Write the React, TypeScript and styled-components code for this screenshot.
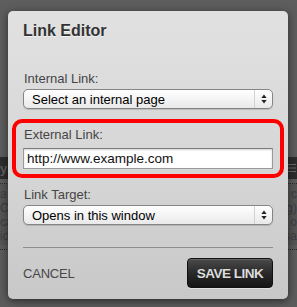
import React from 'react';
import styled, { createGlobalStyle } from 'styled-components';

const GlobalStyle = createGlobalStyle`
  html, body {
    margin: 0;
    padding: 0;
    background: #5c5c5c;
  }
  body {
    font-family: 'Liberation Sans', Arial, Helvetica, sans-serif;
    -webkit-font-smoothing: antialiased;
  }
`;

const backgroundRows: [string, string][] = [
  ['a', 'c'],
  ['C', 'g)'],
  ['ca', 'o'],
  ['id', 'sa'],
];

const App: React.FC = () => {
  return (
    <>
      <GlobalStyle />
      <Page>
        {/* dimmed page content behind the modal */}
        <Backdrop>
          <BackdropTop />
          <Toolbar>
            <ToolbarTitle>yl</ToolbarTitle>
            <MenuIcon width="9" height="10" viewBox="0 0 9 10">
              <rect x="0" y="1" width="9" height="1" fill="#6a6a6a" />
              <rect x="0" y="4.5" width="9" height="1" fill="#6a6a6a" />
              <rect x="0" y="8" width="9" height="1" fill="#6a6a6a" />
            </MenuIcon>
          </Toolbar>
          <DottedRule />
          <TextBlock>
            {backgroundRows.map(([left, right]) => (
              <TextRow key={left}>
                <span>{left}</span>
                <span>{right}</span>
              </TextRow>
            ))}
          </TextBlock>
          <DottedRule />
        </Backdrop>

        <Dialog>
          <Title>Link Editor</Title>

          <Field>
            <Label>Internal Link:</Label>
            <Select>
              <SelectText>Select an internal page</SelectText>
              <ArrowCell>
                <SelectArrows />
              </ArrowCell>
            </Select>
          </Field>

          <Highlight>
            <Label>External Link:</Label>
            <TextInput defaultValue="http://www.example.com" readOnly />
          </Highlight>

          <Field $tight>
            <Label>Link Target:</Label>
            <Select>
              <SelectText>Opens in this window</SelectText>
              <ArrowCell>
                <SelectArrows />
              </ArrowCell>
            </Select>
          </Field>

          <Divider />

          <Footer>
            <CancelButton type="button">CANCEL</CancelButton>
            <SaveButton type="button">SAVE LINK</SaveButton>
          </Footer>
        </Dialog>
      </Page>
    </>
  );
};

const SelectArrows: React.FC = () => (
  <svg width="6" height="10" viewBox="0 0 6 10">
    <path d="M3 0.5 L5.6 4 L0.4 4 Z" fill="#222" />
    <path d="M3 9.5 L5.6 6 L0.4 6 Z" fill="#222" />
  </svg>
);

const Page = styled.div`
  position: relative;
  width: 297px;
  height: 307px;
  overflow: hidden;
  background: #5c5c5c;
`;

const Backdrop = styled.div`
  display: flex;
  flex-direction: column;
  height: 100%;
`;

const BackdropTop = styled.div`
  height: 157px;
  background: #5d5d5d;
`;

const Toolbar = styled.div`
  height: 22px;
  background: #2d2d2d;
  display: flex;
  align-items: center;
  justify-content: space-between;
  padding-right: 1px;
`;

const ToolbarTitle = styled.span`
  font-size: 13px;
  font-weight: bold;
  color: #5e5e5e;
`;

const MenuIcon = styled.svg`
  display: block;
`;

const DottedRule = styled.div`
  height: 0;
  margin-top: 4px;
  border-top: 1px dotted #2a2a2a;
`;

const TextBlock = styled.div`
  display: flex;
  flex-direction: column;
  padding: 3px 0 2px;
  background: #555;
`;

const TextRow = styled.div`
  display: flex;
  justify-content: space-between;
  height: 14px;
  font-size: 12px;
  line-height: 14px;
  color: #3e3e3e;
`;

const Dialog = styled.div`
  position: absolute;
  left: 8px;
  top: 11px;
  width: 280px;
  height: 288px;
  box-sizing: border-box;
  padding: 11px 15px 11px 15px;
  display: flex;
  flex-direction: column;
  border-radius: 5px;
  background: linear-gradient(to bottom, #e1e1e1 0%, #d6d6d6 55%, #c8c8c8 100%);
  box-shadow: 0 2px 8px rgba(0, 0, 0, 0.55);
`;

const Title = styled.h1`
  margin: 0;
  font-size: 16px;
  line-height: 18px;
  font-weight: bold;
  color: #333;
  text-shadow: 0 1px 0 rgba(255, 255, 255, 0.6);
`;

const Field = styled.div<{ $tight?: boolean }>`
  display: flex;
  flex-direction: column;
  gap: 3px;
  margin-top: ${props => (props.$tight ? '9px' : '31px')};
`;

const Label = styled.label`
  font-size: 13px;
  line-height: 15px;
  color: #454545;
  padding-left: 1px;
`;

const Select = styled.div`
  height: 20px;
  box-sizing: border-box;
  display: flex;
  align-items: center;
  border: 1px solid #858585;
  border-radius: 5px;
  background: linear-gradient(to bottom, #ffffff 0%, #f4f4f4 50%, #e9e9e9 100%);
  box-shadow: 0 1px 1px rgba(0, 0, 0, 0.15);
  overflow: hidden;
`;

const SelectText = styled.span`
  flex: 1;
  padding-left: 8px;
  font-size: 13px;
  color: #000;
  white-space: nowrap;
`;

const ArrowCell = styled.span`
  width: 17px;
  height: 100%;
  display: flex;
  align-items: center;
  justify-content: center;
  border-left: 1px solid #d2d2d2;
`;

const Highlight = styled.div`
  display: flex;
  flex-direction: column;
  gap: 6px;
  margin: 10px -11px 0;
  padding: 4px 7px 5px;
  border: 4px solid #ff0000;
  border-radius: 10px;
`;

const TextInput = styled.input`
  height: 21px;
  box-sizing: border-box;
  margin: 0;
  padding: 0 3px;
  border: 1px solid #9a9a9a;
  border-top-color: #7c7c7c;
  background: #fff;
  box-shadow: inset 0 1px 2px rgba(0, 0, 0, 0.18);
  font-family: 'Liberation Sans', Arial, sans-serif;
  font-size: 13.5px;
  color: #111;
  outline: none;
`;

const Divider = styled.hr`
  margin: 22px 0 0;
  border: 0;
  border-top: 1px solid #8e8e8e;
  height: 0;
`;

const Footer = styled.div`
  display: flex;
  align-items: center;
  justify-content: space-between;
  margin-top: 10px;
`;

const CancelButton = styled.button`
  padding: 0;
  border: 0;
  background: none;
  font-family: 'Liberation Sans', Arial, sans-serif;
  font-size: 13px;
  letter-spacing: -0.2px;
  color: #474747;
  cursor: pointer;
`;

const SaveButton = styled.button`
  width: 86px;
  height: 30px;
  padding: 0;
  border: 1px solid #111;
  border-radius: 4px;
  background: linear-gradient(to bottom, #4a4a4a 0%, #2a2a2a 50%, #151515 100%);
  box-shadow: inset 0 1px 0 rgba(255, 255, 255, 0.15), 0 1px 0 rgba(255, 255, 255, 0.4);
  font-family: 'Liberation Sans', Arial, sans-serif;
  font-size: 13.5px;
  font-weight: bold;
  letter-spacing: -0.5px;
  color: #dcdcdc;
  cursor: pointer;
`;

export default App;
